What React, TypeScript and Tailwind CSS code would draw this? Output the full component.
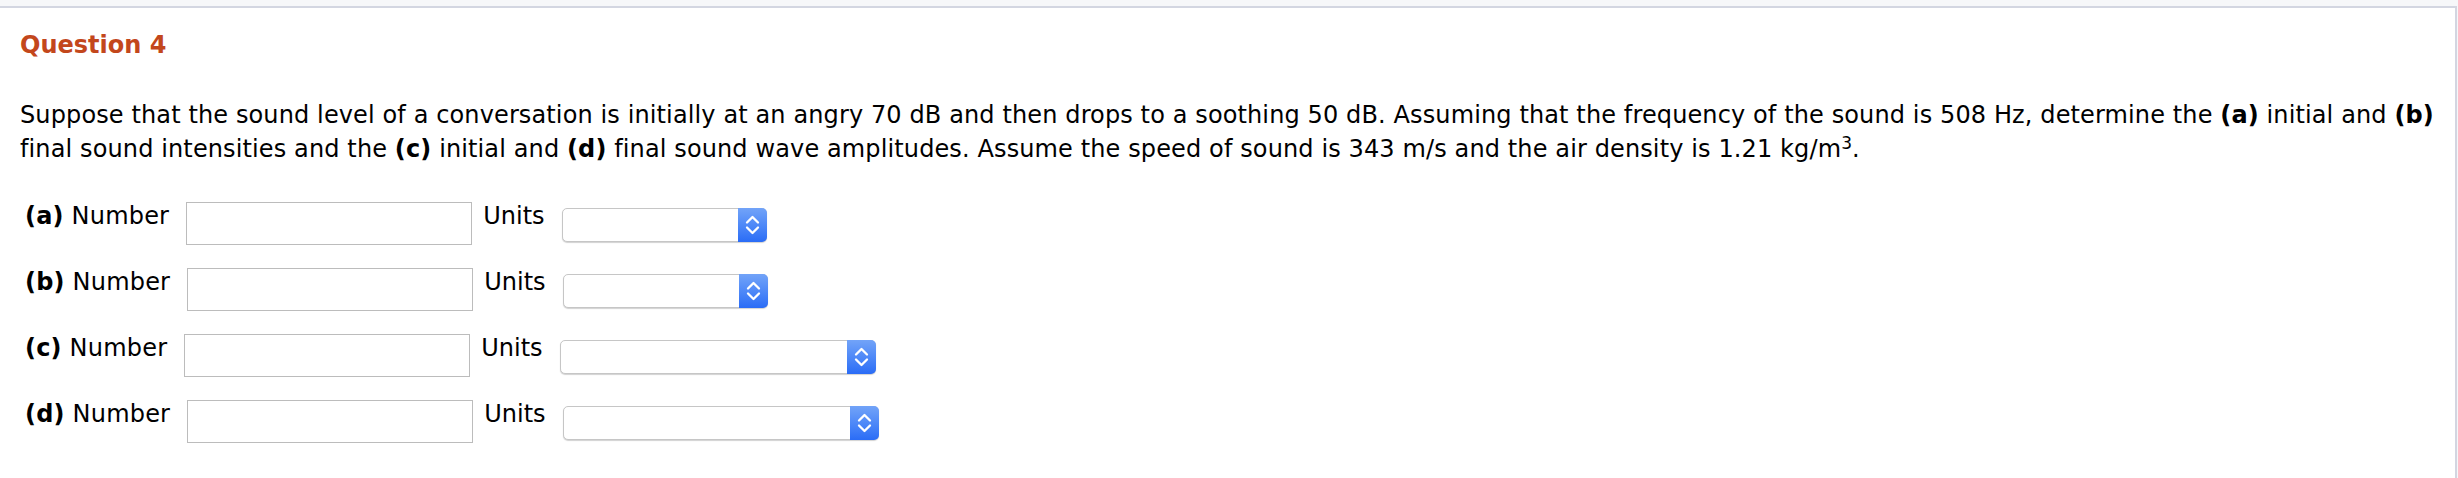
import React from 'react'

interface AnswerRowProps {
  letter: string
  selectWidth: string
}

const Chevrons = () => (
  <svg width="29" height="34" viewBox="0 0 29 34" fill="none">
    <polyline points="9,14.5 14.5,9 20,14.5" stroke="white" strokeWidth="2.3" strokeLinecap="round" strokeLinejoin="round" />
    <polyline points="9,19.5 14.5,25 20,19.5" stroke="white" strokeWidth="2.3" strokeLinecap="round" strokeLinejoin="round" />
  </svg>
)

const UnitsSelect = ({ width }: { width: string }) => (
  <div className={`mt-[6px] flex h-[34px] ${width} rounded-[5px] border border-[#c6c6c6] bg-white shadow-[0_1px_1px_rgba(0,0,0,0.18)]`}>
    <div className="flex-1" />
    <div className="-my-px -mr-px flex w-[29px] items-center justify-center rounded-r-[5px] bg-gradient-to-b from-[#72a3f8] to-[#2a6cf6]">
      <Chevrons />
    </div>
  </div>
)

const AnswerRow = ({ letter, selectWidth }: AnswerRowProps) => (
  <div className="flex items-start pl-[5px]">
    <div className="leading-[28px] tracking-[0.2px]">
      <span className="font-bold">({letter})</span> Number
    </div>
    <input
      type="text"
      className="ml-[17px] h-[43px] w-[286px] border border-[#bcbcbc] bg-white outline-none"
    />
    <div className="ml-[11px] leading-[28px]">Units</div>
    <div className="ml-[17px]">
      <UnitsSelect width={selectWidth} />
    </div>
  </div>
)

const App: React.FC = () => {
  return (
    <div className="min-h-screen bg-[#f6f7f9] pt-[6px] font-['DejaVu_Sans',sans-serif] text-[24px] text-black">
      <div className="min-h-[472px] w-[2457px] border-t-2 border-r-2 border-[#d3d6e1] bg-white pl-[20px] pt-[23px]">
        <h2 className="text-[24px] font-bold leading-[28px] text-[#c3471c]">Question 4</h2>

        <p className="mt-[39px] whitespace-nowrap leading-[34px] tracking-[0.12px]">
          Suppose that the sound level of a conversation is initially at an angry 70 dB and then drops to a soothing 50 dB. Assuming that the frequency of the sound is 508 Hz, determine the <b>(a)</b> initial and <b>(b)</b>
          <br />
          final sound intensities and the <b>(c)</b> initial and <b>(d)</b> final sound wave amplitudes. Assume the speed of sound is 343 m/s and the air density is 1.21 kg/m<sup className="top-[-8px] text-[17px]">3</sup>.
        </p>

        <div className="mt-[36px] flex flex-col gap-[23px]">
          <AnswerRow letter="a" selectWidth="w-[205px]" />
          <AnswerRow letter="b" selectWidth="w-[205px]" />
          <AnswerRow letter="c" selectWidth="w-[316px]" />
          <AnswerRow letter="d" selectWidth="w-[316px]" />
        </div>
      </div>
    </div>
  )
}

export default App
